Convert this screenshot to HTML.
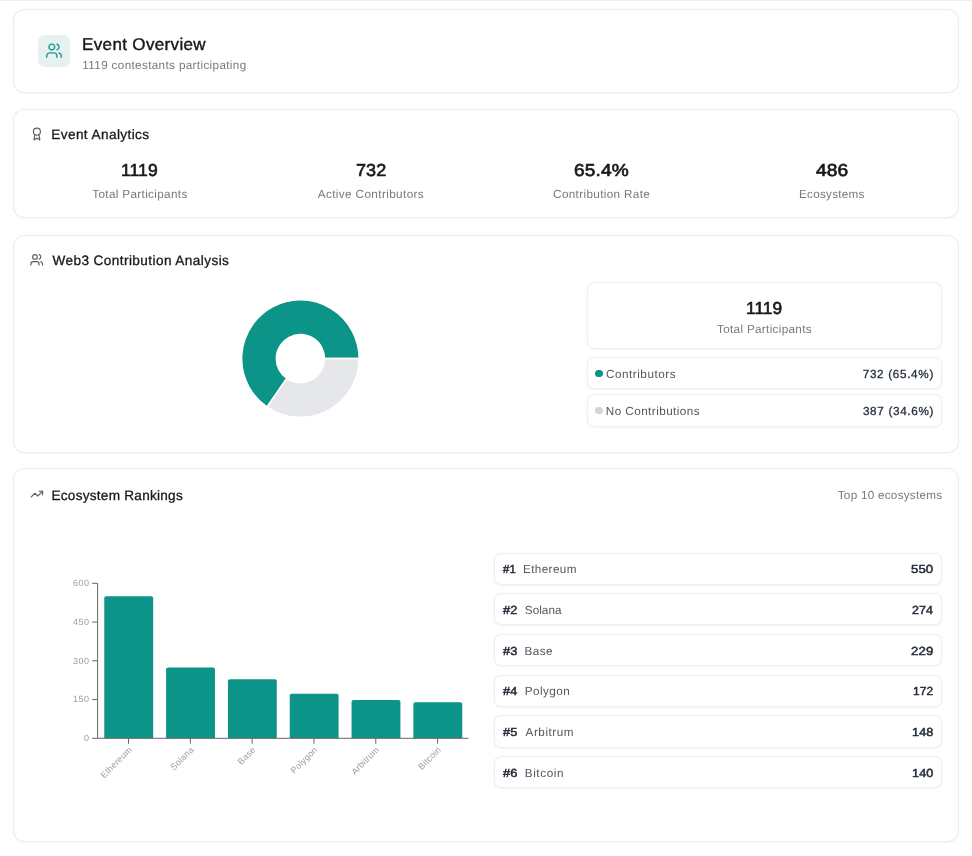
<!DOCTYPE html>
<html lang="en"><head><meta charset="utf-8"><title>Event Overview</title>
<style>
html,body{margin:0;padding:0;background:#fff;}
body{width:972px;height:856px;position:relative;overflow:hidden;font-family:"Liberation Sans",Arial,sans-serif;}
.card{position:absolute;box-sizing:border-box;background:#fff;border:1px solid #eeeeef;box-shadow:0 0 1.5px rgba(0,0,0,0.07),0 1px 2px rgba(0,0,0,0.04);}
.box{position:absolute;box-sizing:border-box;background:#fff;border:1px solid #f0f0f1;box-shadow:0 0 1.5px rgba(0,0,0,0.06),0 1px 2px rgba(0,0,0,0.03);}
.t{position:absolute;white-space:nowrap;line-height:1;text-rendering:geometricPrecision;}
.ov{position:absolute;left:0;top:0;}
.ov text{font-family:"Liberation Sans",Arial,sans-serif;text-rendering:geometricPrecision;}
.topline{position:absolute;left:0;top:0;width:972px;height:1px;background:#efeff1;}
#root{position:absolute;left:0;top:0;width:972px;height:856px;will-change:transform;}
</style></head><body>
<div id="root">
<div class="topline"></div>
<div class="card" style="left:13px;top:9px;width:945.5px;height:83.5px;border-radius:12px"></div>
<div class="card" style="left:13px;top:108.5px;width:945.5px;height:109px;border-radius:12px"></div>
<div class="card" style="left:13px;top:234.5px;width:945.5px;height:218px;border-radius:12px"></div>
<div class="card" style="left:13px;top:468.3px;width:945.5px;height:374px;border-radius:12px"></div>
<div class="box" style="left:587px;top:282px;width:354.5px;height:66.6px;border-radius:8px"></div>
<div class="box" style="left:587px;top:356.9px;width:354.5px;height:32.6px;border-radius:7px"></div>
<div class="box" style="left:587px;top:394.0px;width:354.5px;height:32.6px;border-radius:7px"></div>
<div class="box" style="left:494px;top:552.5px;width:447.5px;height:32.3px;border-radius:7px"></div>
<div class="box" style="left:494px;top:593.2px;width:447.5px;height:32.3px;border-radius:7px"></div>
<div class="box" style="left:494px;top:633.9px;width:447.5px;height:32.3px;border-radius:7px"></div>
<div class="box" style="left:494px;top:674.6px;width:447.5px;height:32.3px;border-radius:7px"></div>
<div class="box" style="left:494px;top:715.3px;width:447.5px;height:32.3px;border-radius:7px"></div>
<div class="box" style="left:494px;top:756.0px;width:447.5px;height:32.3px;border-radius:7px"></div>
<div style="position:absolute;left:38px;top:34.7px;width:32px;height:32px;border-radius:7px;background:#e6f1f0"></div>
<div style="position:absolute;left:595.3px;top:370.1px;width:7.4px;height:7.4px;border-radius:50%;background:#0d9488"></div>
<div style="position:absolute;left:595.3px;top:406.7px;width:7.4px;height:7.4px;border-radius:50%;background:#d1d5db"></div>
<svg class="ov" width="972" height="856" viewBox="0 0 972 856">
<path d="M359.20,358.60 A58.8,58.8 0 1 0 267.09,407.06 L286.80,378.38 A24.0,24.0 0 1 1 324.40,358.60 Z" fill="#0d9488" stroke="#fff" stroke-width="1.6"/>
<path d="M267.09,407.06 A58.8,58.8 0 0 0 359.20,358.60 L324.40,358.60 A24.0,24.0 0 0 1 286.80,378.38 Z" fill="#e5e7eb" stroke="#fff" stroke-width="1.6"/>
<path d="M104.28,738.30 V598.22 Q104.28,596.22 106.28,596.22 H151.14 Q153.14,596.22 153.14,598.22 V738.30 Z" fill="#0d9488"/>
<path d="M166.10,738.30 V669.52 Q166.10,667.52 168.10,667.52 H212.96 Q214.96,667.52 214.96,669.52 V738.30 Z" fill="#0d9488"/>
<path d="M227.92,738.30 V681.14 Q227.92,679.14 229.92,679.14 H274.78 Q276.78,679.14 276.78,681.14 V738.30 Z" fill="#0d9488"/>
<path d="M289.74,738.30 V695.87 Q289.74,693.87 291.74,693.87 H336.60 Q338.60,693.87 338.60,695.87 V738.30 Z" fill="#0d9488"/>
<path d="M351.56,738.30 V702.07 Q351.56,700.07 353.56,700.07 H398.42 Q400.42,700.07 400.42,702.07 V738.30 Z" fill="#0d9488"/>
<path d="M413.38,738.30 V704.13 Q413.38,702.13 415.38,702.13 H460.24 Q462.24,702.13 462.24,704.13 V738.30 Z" fill="#0d9488"/>
<path d="M97.6,583.3 V738.3 H468.52" fill="none" stroke="#666" stroke-width="1"/>
<path d="M92.1,738.30 H97.6" stroke="#666" stroke-width="1"/>
<text x="89.60" y="741.10" text-anchor="end" font-size="9" fill="#999ca3" letter-spacing="0.5">0</text>
<path d="M92.1,699.55 H97.6" stroke="#666" stroke-width="1"/>
<text x="89.60" y="702.35" text-anchor="end" font-size="9" fill="#999ca3" letter-spacing="0.5">150</text>
<path d="M92.1,660.80 H97.6" stroke="#666" stroke-width="1"/>
<text x="89.60" y="663.60" text-anchor="end" font-size="9" fill="#999ca3" letter-spacing="0.5">300</text>
<path d="M92.1,622.05 H97.6" stroke="#666" stroke-width="1"/>
<text x="89.60" y="624.85" text-anchor="end" font-size="9" fill="#999ca3" letter-spacing="0.5">450</text>
<path d="M92.1,583.30 H97.6" stroke="#666" stroke-width="1"/>
<text x="89.60" y="586.10" text-anchor="end" font-size="9" fill="#999ca3" letter-spacing="0.5">600</text>
<path d="M128.51,738.3 V743.8" stroke="#666" stroke-width="1"/>
<text x="132.51" y="750.30" text-anchor="end" font-size="8.9" fill="#999ca3" letter-spacing="0.2" transform="rotate(-45 132.51 750.30)">Ethereum</text>
<path d="M190.33,738.3 V743.8" stroke="#666" stroke-width="1"/>
<text x="194.33" y="750.30" text-anchor="end" font-size="8.9" fill="#999ca3" letter-spacing="0.2" transform="rotate(-45 194.33 750.30)">Solana</text>
<path d="M252.15,738.3 V743.8" stroke="#666" stroke-width="1"/>
<text x="256.15" y="750.30" text-anchor="end" font-size="8.9" fill="#999ca3" letter-spacing="0.2" transform="rotate(-45 256.15 750.30)">Base</text>
<path d="M313.97,738.3 V743.8" stroke="#666" stroke-width="1"/>
<text x="317.97" y="750.30" text-anchor="end" font-size="8.9" fill="#999ca3" letter-spacing="0.2" transform="rotate(-45 317.97 750.30)">Polygon</text>
<path d="M375.79,738.3 V743.8" stroke="#666" stroke-width="1"/>
<text x="379.79" y="750.30" text-anchor="end" font-size="8.9" fill="#999ca3" letter-spacing="0.2" transform="rotate(-45 379.79 750.30)">Arbitrum</text>
<path d="M437.61,738.3 V743.8" stroke="#666" stroke-width="1"/>
<text x="441.61" y="750.30" text-anchor="end" font-size="8.9" fill="#999ca3" letter-spacing="0.2" transform="rotate(-45 441.61 750.30)">Bitcoin</text>
<g transform="translate(45.3,42.0) scale(0.725)" fill="none" stroke="#14998d" stroke-width="1.9" stroke-linecap="round" stroke-linejoin="round"><path d="M16 21v-2a4 4 0 0 0-4-4H6a4 4 0 0 0-4 4v2"/><circle cx="9" cy="7" r="4"/><path d="M22 21v-2a4 4 0 0 0-3-3.87"/><path d="M16 3.13a4 4 0 0 1 0 7.75"/></g>
<g transform="translate(29.9,127.0) scale(0.5833333333333334)" fill="none" stroke="#5b5e66" stroke-width="2" stroke-linecap="round" stroke-linejoin="round"><path d="m15.477 12.89 1.515 8.526a.5.5 0 0 1-.81.47l-3.58-2.687a1 1 0 0 0-1.197 0l-3.586 2.686a.5.5 0 0 1-.81-.469l1.514-8.526"/><circle cx="12" cy="8" r="6"/></g>
<g transform="translate(29.7,252.8) scale(0.5833333333333334)" fill="none" stroke="#5b5e66" stroke-width="2" stroke-linecap="round" stroke-linejoin="round"><path d="M16 21v-2a4 4 0 0 0-4-4H6a4 4 0 0 0-4 4v2"/><circle cx="9" cy="7" r="4"/><path d="M22 21v-2a4 4 0 0 0-3-3.87"/><path d="M16 3.13a4 4 0 0 1 0 7.75"/></g>
<g transform="translate(30.1,487.3) scale(0.5666666666666667)" fill="none" stroke="#5b5e66" stroke-width="2" stroke-linecap="round" stroke-linejoin="round"><polyline points="22 7 13.5 15.5 8.500 10.500 2 17"/><polyline points="16 7 22 7 22 13"/></g>
</svg>
<span class="t" id="t_title" style="left:82.07px;top:36.10px;font-size:17.0px;color:#18181b;letter-spacing:0.348px;-webkit-text-stroke:0.4px #18181b;">Event Overview</span>
<span class="t" id="t_sub" style="left:82.32px;top:60.10px;font-size:11.7px;color:#757980;letter-spacing:0.355px;">1119 contestants participating</span>
<span class="t" id="t_h2" style="left:51.25px;top:128.10px;font-size:13.6px;color:#18181b;letter-spacing:0.406px;-webkit-text-stroke:0.3px #18181b;">Event Analytics</span>
<span class="t" id="t_v1" style="left:121.05px;top:162.10px;font-size:17.3px;color:#18181b;letter-spacing:0.100px;transform:scaleX(1.0152);transform-origin:0 0;-webkit-text-stroke:0.65px #18181b;">1119</span>
<span class="t" id="t_l1" style="left:92.33px;top:189.10px;font-size:11.7px;color:#757980;letter-spacing:0.348px;">Total Participants</span>
<span class="t" id="t_v2" style="left:355.95px;top:162.10px;font-size:17.3px;color:#18181b;letter-spacing:0.100px;transform:scaleX(1.0408);transform-origin:0 0;-webkit-text-stroke:0.65px #18181b;">732</span>
<span class="t" id="t_l2" style="left:317.75px;top:189.10px;font-size:11.7px;color:#757980;letter-spacing:0.399px;">Active Contributors</span>
<span class="t" id="t_v3" style="left:574.24px;top:162.10px;font-size:17.3px;color:#18181b;letter-spacing:0.100px;transform:scaleX(1.1056);transform-origin:0 0;-webkit-text-stroke:0.65px #18181b;">65.4%</span>
<span class="t" id="t_l3" style="left:553.10px;top:189.10px;font-size:11.7px;color:#757980;letter-spacing:0.359px;">Contribution Rate</span>
<span class="t" id="t_v4" style="left:815.95px;top:162.10px;font-size:17.3px;color:#18181b;letter-spacing:0.100px;transform:scaleX(1.1117);transform-origin:0 0;-webkit-text-stroke:0.65px #18181b;">486</span>
<span class="t" id="t_l4" style="left:799.00px;top:189.10px;font-size:11.7px;color:#757980;letter-spacing:0.269px;">Ecosystems</span>
<span class="t" id="t_h3" style="left:52.46px;top:254.10px;font-size:13.6px;color:#18181b;letter-spacing:0.419px;-webkit-text-stroke:0.3px #18181b;">Web3 Contribution Analysis</span>
<span class="t" id="t_bv" style="left:745.97px;top:300.10px;font-size:17.3px;color:#18181b;letter-spacing:0.100px;transform:scaleX(1.0011);transform-origin:0 0;-webkit-text-stroke:0.65px #18181b;">1119</span>
<span class="t" id="t_bl" style="left:717.02px;top:324.10px;font-size:11.7px;color:#757980;letter-spacing:0.326px;">Total Participants</span>
<span class="t" id="t_c1" style="left:606.06px;top:369.10px;font-size:11.7px;color:#52565e;letter-spacing:0.525px;">Contributors</span>
<span class="t" id="t_c1v" style="left:862.76px;top:369.10px;font-size:11.7px;color:#1f2937;letter-spacing:0.685px;-webkit-text-stroke:0.3px #1f2937;">732 (65.4%)</span>
<span class="t" id="t_c2" style="left:605.78px;top:406.10px;font-size:11.7px;color:#52565e;letter-spacing:0.453px;">No Contributions</span>
<span class="t" id="t_c2v" style="left:862.95px;top:406.10px;font-size:11.7px;color:#1f2937;letter-spacing:0.681px;-webkit-text-stroke:0.3px #1f2937;">387 (34.6%)</span>
<span class="t" id="t_h4" style="left:51.45px;top:489.10px;font-size:13.6px;color:#18181b;letter-spacing:0.256px;-webkit-text-stroke:0.3px #18181b;">Ecosystem Rankings</span>
<span class="t" id="t_top" style="left:837.76px;top:490.10px;font-size:11.7px;color:#757980;letter-spacing:0.270px;">Top 10 ecosystems</span>
<span class="t" id="t_r0n" style="left:503.49px;top:564.10px;font-size:11.7px;color:#1f2937;letter-spacing:0.100px;transform:scaleX(0.9679);transform-origin:0 0;-webkit-text-stroke:0.5px #1f2937;">#1</span>
<span class="t" id="t_r0e" style="left:523.08px;top:564.10px;font-size:11.7px;color:#52565e;letter-spacing:0.374px;">Ethereum</span>
<span class="t" id="t_r0v" style="left:910.70px;top:564.10px;font-size:11.7px;color:#1f2937;letter-spacing:0.100px;transform:scaleX(1.1238);transform-origin:0 0;-webkit-text-stroke:0.5px #1f2937;">550</span>
<span class="t" id="t_r1n" style="left:502.78px;top:605.10px;font-size:11.7px;color:#1f2937;letter-spacing:0.100px;transform:scaleX(1.0968);transform-origin:0 0;-webkit-text-stroke:0.5px #1f2937;">#2</span>
<span class="t" id="t_r1e" style="left:524.80px;top:605.10px;font-size:11.7px;color:#52565e;letter-spacing:0.051px;">Solana</span>
<span class="t" id="t_r1v" style="left:911.53px;top:605.10px;font-size:11.7px;color:#1f2937;letter-spacing:0.100px;transform:scaleX(1.0655);transform-origin:0 0;-webkit-text-stroke:0.5px #1f2937;">274</span>
<span class="t" id="t_r2n" style="left:502.78px;top:646.10px;font-size:11.7px;color:#1f2937;letter-spacing:0.100px;transform:scaleX(1.0938);transform-origin:0 0;-webkit-text-stroke:0.5px #1f2937;">#3</span>
<span class="t" id="t_r2e" style="left:524.58px;top:646.10px;font-size:11.7px;color:#52565e;letter-spacing:0.408px;">Base</span>
<span class="t" id="t_r2v" style="left:911.37px;top:646.10px;font-size:11.7px;color:#1f2937;letter-spacing:0.100px;transform:scaleX(1.1308);transform-origin:0 0;-webkit-text-stroke:0.5px #1f2937;">229</span>
<span class="t" id="t_r3n" style="left:502.98px;top:686.10px;font-size:11.7px;color:#1f2937;letter-spacing:0.100px;transform:scaleX(1.0892);transform-origin:0 0;-webkit-text-stroke:0.5px #1f2937;">#4</span>
<span class="t" id="t_r3e" style="left:524.78px;top:686.10px;font-size:11.7px;color:#52565e;letter-spacing:0.440px;">Polygon</span>
<span class="t" id="t_r3v" style="left:913.30px;top:686.10px;font-size:11.7px;color:#1f2937;letter-spacing:0.100px;transform:scaleX(1.0204);transform-origin:0 0;-webkit-text-stroke:0.5px #1f2937;">172</span>
<span class="t" id="t_r4n" style="left:502.76px;top:727.10px;font-size:11.7px;color:#1f2937;letter-spacing:0.100px;transform:scaleX(1.0942);transform-origin:0 0;-webkit-text-stroke:0.5px #1f2937;">#5</span>
<span class="t" id="t_r4e" style="left:525.61px;top:727.10px;font-size:11.7px;color:#52565e;letter-spacing:0.534px;">Arbitrum</span>
<span class="t" id="t_r4v" style="left:911.51px;top:727.10px;font-size:11.7px;color:#1f2937;letter-spacing:0.100px;transform:scaleX(1.0821);transform-origin:0 0;-webkit-text-stroke:0.5px #1f2937;">148</span>
<span class="t" id="t_r5n" style="left:502.73px;top:768.10px;font-size:11.7px;color:#1f2937;letter-spacing:0.100px;transform:scaleX(1.0981);transform-origin:0 0;-webkit-text-stroke:0.5px #1f2937;">#6</span>
<span class="t" id="t_r5e" style="left:524.78px;top:768.10px;font-size:11.7px;color:#52565e;letter-spacing:0.595px;">Bitcoin</span>
<span class="t" id="t_r5v" style="left:911.83px;top:768.10px;font-size:11.7px;color:#1f2937;letter-spacing:0.100px;transform:scaleX(1.0847);transform-origin:0 0;-webkit-text-stroke:0.5px #1f2937;">140</span>
</div>
</body></html>
